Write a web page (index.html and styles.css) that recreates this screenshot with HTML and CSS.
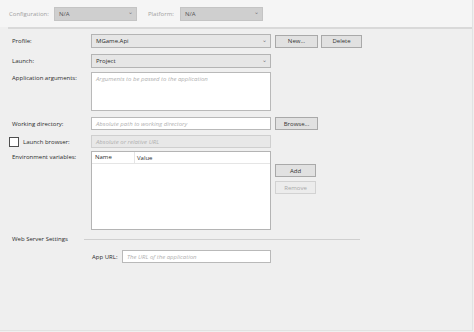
FILE: index.html
```html
<!DOCTYPE html>
<html lang="en">
<head>
    <meta charset="UTF-8">
    <title>Debug Profile</title>
    <link rel="stylesheet" href="styles.css">
</head>
<body>
    <div class="window">
        <div class="toolbar">
            <span class="toolbar-label">Configuration:</span>
            <div class="combo combo-disabled config-combo"><span>N/A</span><span class="arrow">&#8964;</span></div>
            <span class="toolbar-label platform-label">Platform:</span>
            <div class="combo combo-disabled config-combo"><span>N/A</span><span class="arrow">&#8964;</span></div>
        </div>
        <div class="separator"></div>

        <div class="form">
            <div class="row row-profile">
                <label class="label">Profile:</label>
                <div class="combo field"><span>MGame.Api</span><span class="arrow">&#8964;</span></div>
                <button class="btn">New...</button>
                <button class="btn btn-delete">Delete</button>
            </div>

            <div class="row row-launch">
                <label class="label">Launch:</label>
                <div class="combo field"><span>Project</span><span class="arrow">&#8964;</span></div>
            </div>

            <div class="row row-args">
                <label class="label label-top">Application arguments:</label>
                <div class="textbox field textarea"><span class="placeholder">Arguments to be passed to the application</span></div>
            </div>

            <div class="row row-workdir">
                <label class="label">Working directory:</label>
                <div class="textbox field"><span class="placeholder">Absolute path to working directory</span></div>
                <button class="btn">Browse...</button>
            </div>

            <div class="row row-browser">
                <label class="label label-check"><span class="checkbox"></span>Launch browser:</label>
                <div class="textbox field textbox-disabled"><span class="placeholder">Absolute or relative URL</span></div>
            </div>

            <div class="row row-env">
                <label class="label label-top">Environment variables:</label>
                <div class="listview field">
                    <div class="list-header">
                        <span class="col-name">Name</span>
                        <span class="col-value">Value</span>
                    </div>
                </div>
                <div class="side-buttons">
                    <button class="btn btn-small">Add</button>
                    <button class="btn btn-small btn-disabled">Remove</button>
                </div>
            </div>

            <div class="group-header">
                <span class="group-title">Web Server Settings</span>
                <span class="group-line"></span>
            </div>

            <div class="row row-url">
                <label class="label label-url">App URL:</label>
                <div class="textbox url-field"><span class="placeholder">The URL of the application</span></div>
            </div>
        </div>
    </div>
</body>
</html>
```

FILE: styles.css
```css
body {
    margin: 0;
    background-color: #f0f0f0;
    font-family: "Open Sans", "Liberation Sans", sans-serif;
    font-size: 6px;
    color: #2c2c2c;
}
.window {
    width: 472px;
    height: 330px;
    border-right: 1px solid #e2e2e2;
    border-bottom: 1px solid #e2e2e2;
    background-color: #efefef;
}
.toolbar {
    height: 27px;
    display: flex;
    align-items: center;
    padding-left: 9px;
    background-color: #f5f5f5;
}
.toolbar-label {
    color: #a0a0a0;
    width: 45px;
}
.platform-label {
    margin-left: 11px;
    width: 32px;
}
.separator {
    height: 2px;
    margin-left: 8px;
    background-color: #d9d9d9;
}
.combo {
    box-sizing: border-box;
    display: flex;
    align-items: center;
    justify-content: space-between;
    padding: 0 3px 0 4px;
    background-color: #e6e6e6;
    border: 1px solid #b4b4b4;
    height: 14px;
}
.combo .arrow {
    font-size: 6px;
    color: #777;
    line-height: 1;
    margin-top: -3px;
}
.combo-disabled {
    background-color: #cfcfcf;
    border-color: #c4c4c4;
    color: #555;
}
.config-combo {
    width: 83px;
}
.form {
    padding-left: 12px;
    padding-top: 5px;
}
.row {
    display: flex;
    align-items: center;
}
.label {
    width: 79px;
    flex-shrink: 0;
}
.label-top {
    align-self: flex-start;
    padding-top: 2px;
}
.field {
    width: 180px;
    box-sizing: border-box;
}
.textbox {
    box-sizing: border-box;
    height: 13px;
    background-color: #fff;
    border: 1px solid #b9b9b9;
    padding: 0 4px;
    display: flex;
    align-items: center;
}
.textarea {
    height: 39px;
    align-items: flex-start;
    padding-top: 2px;
}
.textbox-disabled {
    background-color: #e8e8e8;
    border-color: #cfcfcf;
}
.placeholder {
    color: #b0b0b0;
    font-style: italic;
}
.btn {
    box-sizing: border-box;
    font-family: inherit;
    font-size: 6px;
    color: #333;
    height: 13px;
    width: 43px;
    padding: 0;
    margin-left: 4px;
    background-color: #e1e1e1;
    border: 1px solid #a9a9a9;
}
.btn-delete {
    width: 41px;
    margin-left: 3px;
}
.row-launch {
    margin-top: 6px;
}
.row-args {
    margin-top: 4px;
}
.row-workdir {
    margin-top: 6px;
}
.row-browser {
    margin-top: 5px;
}
.label-check {
    display: flex;
    align-items: center;
    margin-left: -3px;
    width: 82px;
}
.checkbox {
    width: 10px;
    height: 10px;
    box-sizing: border-box;
    background-color: #fff;
    border: 1px solid #4f4f4f;
    margin-right: 4px;
}
.row-env {
    margin-top: 3px;
    align-items: flex-start;
}
.listview {
    height: 79px;
    background-color: #fff;
    border: 1px solid #b4b4b4;
}
.list-header {
    display: flex;
    height: 11px;
    align-items: center;
    border-bottom: 1px solid #e5e5e5;
}
.col-name {
    width: 39px;
    padding-left: 3px;
    border-right: 1px solid #e5e5e5;
    height: 11px;
    line-height: 11px;
}
.col-value {
    padding-left: 2px;
}
.side-buttons {
    display: flex;
    flex-direction: column;
    gap: 4px;
    margin-top: 13px;
}
.btn-small {
    width: 41px;
}
.btn-disabled {
    color: #a8a8a8;
    background-color: #ececec;
    border-color: #d2d2d2;
}
.group-header {
    display: flex;
    align-items: center;
    margin-top: 4px;
    height: 10px;
}
.group-title {
    width: 72px;
}
.group-line {
    height: 1px;
    width: 276px;
    background-color: #cfcfcf;
}
.row-url {
    margin-top: 6px;
}
.label-url {
    margin-left: 80px;
    width: 30px;
}
.url-field {
    width: 149px;
}
```
